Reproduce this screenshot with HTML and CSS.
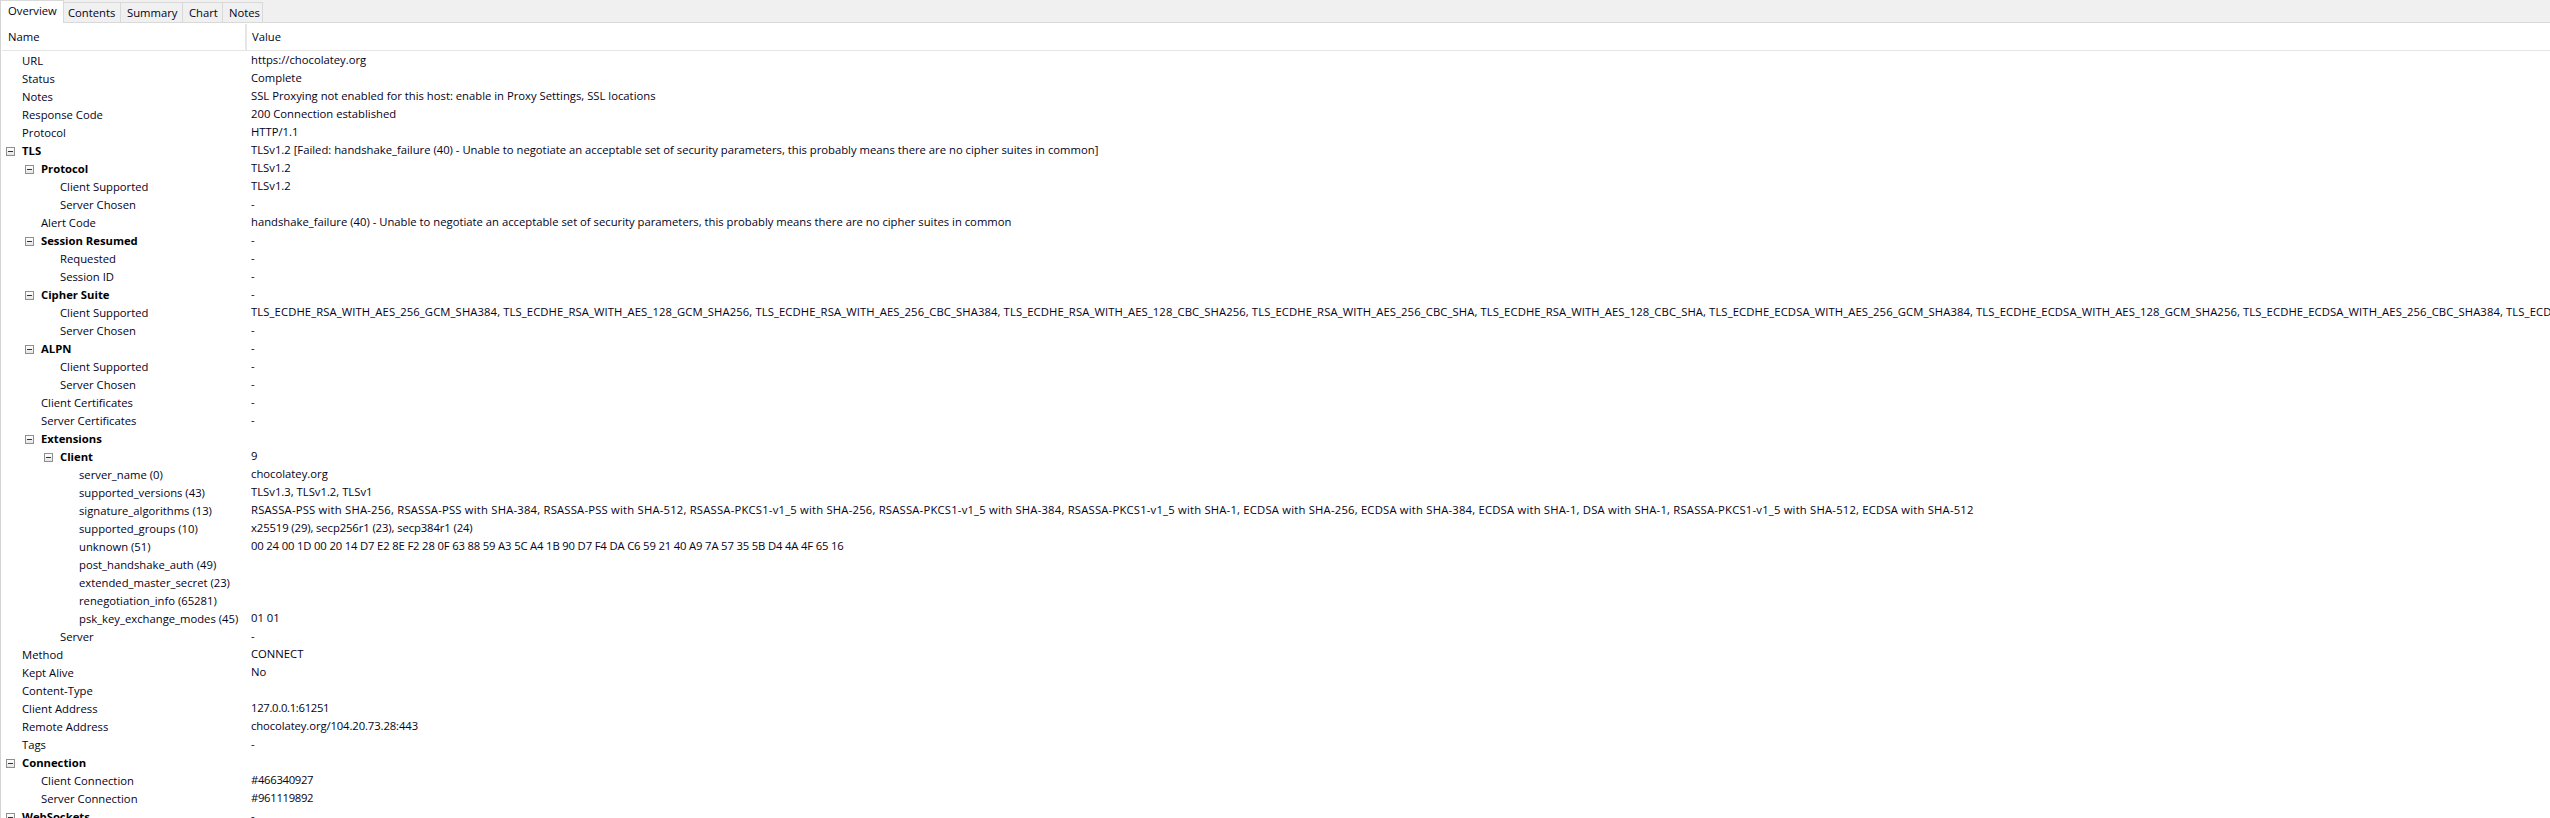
FILE: index.html
```html
<!DOCTYPE html>
<html lang="en">
<head>
<meta charset="utf-8">
<title>Overview</title>
<link rel="stylesheet" href="styles.css">
</head>
<body>
<div class="app">
  <nav class="tabs">
    <span class="tab tab-active">Overview</span>
    <span class="tab tab-contents">Contents</span>
    <span class="tab tab-summary">Summary</span>
    <span class="tab tab-chart">Chart</span>
    <span class="tab tab-notes">Notes</span>
  </nav>
  <div class="head">
    <div class="head-name">Name</div>
    <div class="head-value">Value</div>
  </div>
  <div class="tree">
    <div class="row"><div class="name l0">URL</div><div class="value">https://chocolatey.org</div></div>
    <div class="row"><div class="name l0">Status</div><div class="value">Complete</div></div>
    <div class="row"><div class="name l0">Notes</div><div class="value">SSL Proxying not enabled for this host: enable in Proxy Settings, SSL locations</div></div>
    <div class="row"><div class="name l0">Response Code</div><div class="value">200 Connection established</div></div>
    <div class="row"><div class="name l0">Protocol</div><div class="value">HTTP/1.1</div></div>
    <div class="row"><div class="name l0 group"><i class="toggle"></i>TLS</div><div class="value">TLSv1.2 [Failed: handshake_failure (40) - Unable to negotiate an acceptable set of security parameters, this probably means there are no cipher suites in common]</div></div>
    <div class="row"><div class="name l1 group"><i class="toggle"></i>Protocol</div><div class="value">TLSv1.2</div></div>
    <div class="row"><div class="name l2">Client Supported</div><div class="value">TLSv1.2</div></div>
    <div class="row"><div class="name l2">Server Chosen</div><div class="value">-</div></div>
    <div class="row"><div class="name l1">Alert Code</div><div class="value">handshake_failure (40) - Unable to negotiate an acceptable set of security parameters, this probably means there are no cipher suites in common</div></div>
    <div class="row"><div class="name l1 group"><i class="toggle"></i>Session Resumed</div><div class="value">-</div></div>
    <div class="row"><div class="name l2">Requested</div><div class="value">-</div></div>
    <div class="row"><div class="name l2">Session ID</div><div class="value">-</div></div>
    <div class="row"><div class="name l1 group"><i class="toggle"></i>Cipher Suite</div><div class="value">-</div></div>
    <div class="row"><div class="name l2">Client Supported</div><div class="value ciphers">TLS_ECDHE_RSA_WITH_AES_256_GCM_SHA384, TLS_ECDHE_RSA_WITH_AES_128_GCM_SHA256, TLS_ECDHE_RSA_WITH_AES_256_CBC_SHA384, TLS_ECDHE_RSA_WITH_AES_128_CBC_SHA256, TLS_ECDHE_RSA_WITH_AES_256_CBC_SHA, TLS_ECDHE_RSA_WITH_AES_128_CBC_SHA, TLS_ECDHE_ECDSA_WITH_AES_256_GCM_SHA384, TLS_ECDHE_ECDSA_WITH_AES_128_GCM_SHA256, TLS_ECDHE_ECDSA_WITH_AES_256_CBC_SHA384, TLS_ECDHE_ECDSA_WITH_AES_128_CBC_SHA256</div></div>
    <div class="row"><div class="name l2">Server Chosen</div><div class="value">-</div></div>
    <div class="row"><div class="name l1 group"><i class="toggle"></i>ALPN</div><div class="value">-</div></div>
    <div class="row"><div class="name l2">Client Supported</div><div class="value">-</div></div>
    <div class="row"><div class="name l2">Server Chosen</div><div class="value">-</div></div>
    <div class="row"><div class="name l1">Client Certificates</div><div class="value">-</div></div>
    <div class="row"><div class="name l1">Server Certificates</div><div class="value">-</div></div>
    <div class="row"><div class="name l1 group"><i class="toggle"></i>Extensions</div><div class="value"></div></div>
    <div class="row"><div class="name l2 group"><i class="toggle"></i>Client</div><div class="value">9</div></div>
    <div class="row"><div class="name l3">server_name (0)</div><div class="value">chocolatey.org</div></div>
    <div class="row"><div class="name l3">supported_versions (43)</div><div class="value">TLSv1.3, TLSv1.2, TLSv1</div></div>
    <div class="row"><div class="name l3">signature_algorithms (13)</div><div class="value sigs">RSASSA-PSS with SHA-256, RSASSA-PSS with SHA-384, RSASSA-PSS with SHA-512, RSASSA-PKCS1-v1_5 with SHA-256, RSASSA-PKCS1-v1_5 with SHA-384, RSASSA-PKCS1-v1_5 with SHA-1, ECDSA with SHA-256, ECDSA with SHA-384, ECDSA with SHA-1, DSA with SHA-1, RSASSA-PKCS1-v1_5 with SHA-512, ECDSA with SHA-512</div></div>
    <div class="row"><div class="name l3">supported_groups (10)</div><div class="value groups">x25519 (29), secp256r1 (23), secp384r1 (24)</div></div>
    <div class="row"><div class="name l3">unknown (51)</div><div class="value hex">00 24 00 1D 00 20 14 D7 E2 8E F2 28 0F 63 88 59 A3 5C A4 1B 90 D7 F4 DA C6 59 21 40 A9 7A 57 35 5B D4 4A 4F 65 16</div></div>
    <div class="row"><div class="name l3">post_handshake_auth (49)</div><div class="value"></div></div>
    <div class="row"><div class="name l3">extended_master_secret (23)</div><div class="value"></div></div>
    <div class="row"><div class="name l3">renegotiation_info (65281)</div><div class="value"></div></div>
    <div class="row"><div class="name l3">psk_key_exchange_modes (45)</div><div class="value">01 01</div></div>
    <div class="row"><div class="name l2">Server</div><div class="value">-</div></div>
    <div class="row"><div class="name l0">Method</div><div class="value">CONNECT</div></div>
    <div class="row"><div class="name l0">Kept Alive</div><div class="value">No</div></div>
    <div class="row"><div class="name l0">Content-Type</div><div class="value"></div></div>
    <div class="row"><div class="name l0">Client Address</div><div class="value num">127.0.0.1:61251</div></div>
    <div class="row"><div class="name l0">Remote Address</div><div class="value groups">chocolatey.org/104.20.73.28:443</div></div>
    <div class="row"><div class="name l0">Tags</div><div class="value">-</div></div>
    <div class="row"><div class="name l0 group"><i class="toggle"></i>Connection</div><div class="value"></div></div>
    <div class="row"><div class="name l1">Client Connection</div><div class="value num">#466340927</div></div>
    <div class="row"><div class="name l1">Server Connection</div><div class="value num">#961119892</div></div>
    <div class="row"><div class="name l0 group"><i class="toggle"></i>WebSockets</div><div class="value">-</div></div>
  </div>
</div>
</body>
</html>
```
FILE: styles.css
```css
* { box-sizing: border-box; }
html, body { margin: 0; height: 100%; overflow: hidden; background: #fff; }
body { font-family: "Open Sans", "Noto Sans", sans-serif; font-size: 11.27px; color: #05021a; }
.app { height: 818px; overflow: hidden; border-left: 1px solid #d4d4d4; }

.tabs { display: flex; align-items: flex-end; height: 23px; background: #f0f0f0; border-bottom: 1px solid #d9d9d9; }
.tab { display: flex; align-items: center; height: 20px; padding-left: 6px; background: #f0f0f0; border: 1px solid #d9d9d9; border-bottom: 0; border-left: 0; }
.tab-active { width: 63px; height: 23px; margin-bottom: -1px; padding-left: 7px; padding-bottom: 4px; background: #fff; }
.tab-contents { width: 57px; padding-left: 4px; }
.tab-summary { width: 62px; }
.tab-chart { width: 40px; }
.tab-notes { width: 40px; }

.head { display: flex; height: 28px; border-bottom: 1px solid #e5e5e5; margin-left: 1px; }
.head-name { width: 245px; padding: 5px 0 0 6px; border-right: 2px solid #e5e5e5; margin-top: 1px; }
.head-value { flex: 1; padding: 6px 0 0 5px; }

.tree { padding-top: 1px; }
.row { display: flex; height: 18px; line-height: 18px; white-space: nowrap; }
.name { flex: none; width: 250px; display: flex; align-items: center; }
.value { flex: 1; min-width: 0; overflow: hidden; margin-top: -1px; }
.ciphers { letter-spacing: 0.1px; }
.sigs { letter-spacing: 0.2px; }
.hex { letter-spacing: -0.16px; }
.groups { letter-spacing: -0.1px; }
.num { letter-spacing: -0.3px; }
.group { font-weight: 700; color: #000; }
.l0 { padding-left: 21px; }
.l1 { padding-left: 40px; }
.l2 { padding-left: 59px; }
.l3 { padding-left: 78px; }

.toggle { position: relative; flex: none; width: 9px; height: 9px; margin-left: -16px; margin-right: 7px; border: 1px solid #8e8f8f; background: linear-gradient(#fff, #e6e6e6); }
.toggle::after { content: ""; position: absolute; left: 1px; top: 3px; width: 5px; height: 1px; background: #333; }
```
